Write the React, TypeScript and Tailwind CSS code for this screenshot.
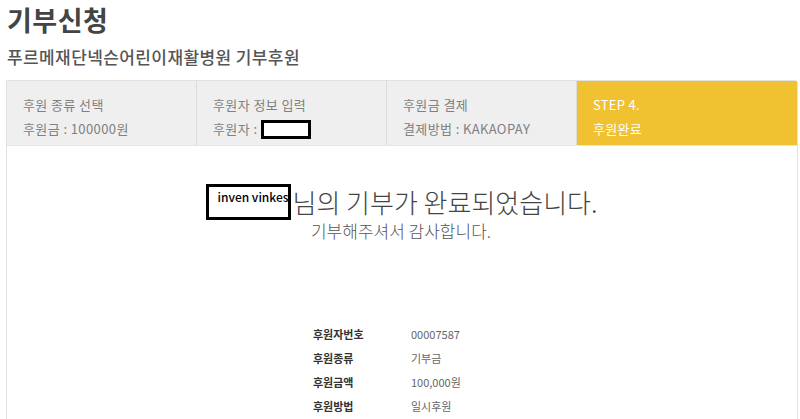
import React from "react";

const font = { fontFamily: '"Noto Sans CJK KR", "Noto Sans", sans-serif' };

function Step({ title, children, active }: { title: string; children: React.ReactNode; active?: boolean }) {
  return (
    <div
      className={
        active
          ? "flex-1 bg-[#f0c232] text-white pl-[16px] pt-[12px] text-[13px] leading-[24px] tracking-[0.3px]"
          : "w-[190px] shrink-0 bg-[#efefef] text-[#808080] pl-[16px] pt-[12px] text-[13px] leading-[24px] tracking-[0.4px] border-r border-[#dcdcdc]"
      }
    >
      <div>{title}</div>
      <div className="flex items-center">{children}</div>
    </div>
  );
}

export default function App() {
  const rows = [
    ["후원자번호", "00007587"],
    ["후원종류", "기부금"],
    ["후원금액", "100,000원"],
    ["후원방법", "일시후원"],
  ];
  return (
    <div className="w-[800px] h-[419px] overflow-hidden bg-white" style={font}>
      <div className="pl-[7px] pt-[2px]">
        <h1 className="text-[27px] font-bold text-[#444] leading-[36px] tracking-[0.5px]">기부신청</h1>
        <h2 className="mt-[8px] text-[17px] font-medium text-[#555] leading-[22px] tracking-[0.4px]">푸르메재단넥슨어린이재활병원 기부후원</h2>
      </div>
      <div className="ml-[6px] mr-[2px] mt-[12px] border-x border-t border-[#e2e2e2] rounded-tr-[4px] h-[400px]">
        <div className="flex h-[65px] border-b border-[#e6e6e6]">
          <Step title="후원 종류 선택">후원금 : 100000원</Step>
          <Step title="후원자 정보 입력">
            <span>후원자 :&nbsp;</span>
            <span className="inline-block w-[50px] h-[19px] border-[3px] border-black bg-white" />
          </Step>
          <Step title="후원금 결제">결제방법 : KAKAOPAY</Step>
          <Step title="STEP 4." active>후원완료</Step>
        </div>
        <div className="flex flex-col items-center pt-[38px]">
          <div className="flex items-center">
            <div className="w-[85px] h-[36px] border-[3px] border-black text-[12px] text-black font-medium pl-[8px] leading-[14px] pt-[3px] mr-[1px] whitespace-nowrap">
              inven vinkes
            </div>
            <div className="text-[26px] text-[#444] leading-[30px] font-light">님의 기부가 완료되었습니다.</div>
          </div>
          <div className="text-[17px] text-[#555] mt-[0px] leading-[22px] font-light ml-[-2px]">기부해주셔서 감사합니다.</div>
        </div>
        <div className="mt-[80px] ml-[306px] flex flex-col">
          {rows.map(([k, v]) => (
            <div key={k} className="flex h-[24px] items-center text-[11px]">
              <div className="w-[98px] font-bold text-[#333]">{k}</div>
              <div className="text-[#666]">{v}</div>
            </div>
          ))}
        </div>
      </div>
    </div>
  );
}
